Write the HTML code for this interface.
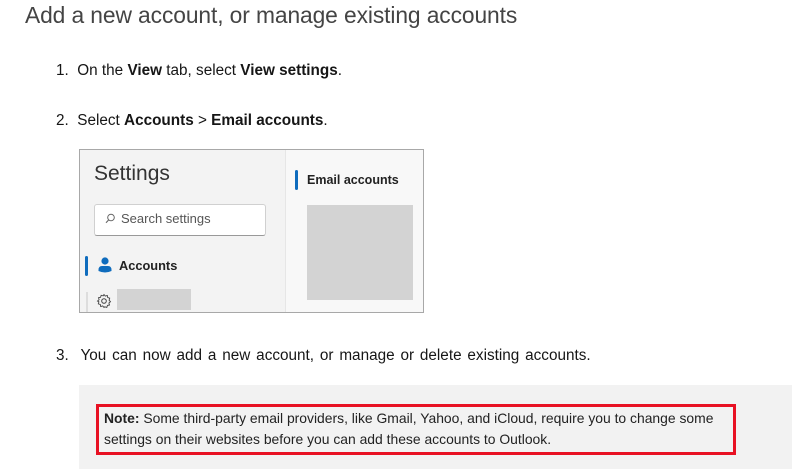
<!DOCTYPE html>
<html><head><style>
body{margin:0;width:801px;height:469px;background:#fff;position:relative;overflow:hidden;font-family:"Liberation Sans",sans-serif;color:#161616}
.a{position:absolute;white-space:nowrap}
b{font-weight:bold}
</style></head><body>
<div class="a" style="left:25px;top:2px;font-size:22.8px;color:#444;font-weight:300;letter-spacing:-0.1px">Add a new account, or manage existing accounts</div>
<div class="a" style="left:56px;top:62px;font-size:15.3px">1.&nbsp;&nbsp;On the <b>View</b> tab, select <b>View settings</b>.</div>
<div class="a" style="left:56px;top:112px;font-size:15.3px">2.&nbsp;&nbsp;Select <b>Accounts</b> &gt; <b>Email accounts</b>.</div>
<div class="a" style="left:79px;top:149px;width:343px;height:162px;border:1px solid #a8a8a8;background:#f3f3f3;overflow:hidden">
  <div class="a" style="left:205px;top:0;width:138px;height:162px;background:#f8f8f8;border-left:1px solid #e6e6e6"></div>
  <div class="a" style="left:14px;top:12px;font-size:21px;color:#333">Settings</div>
  <div class="a" style="left:14px;top:54px;width:170px;height:30px;background:#fff;border:1px solid #d0d0d0;border-bottom-color:#999;border-radius:3px"></div>
  <svg class="a" style="left:25px;top:63px" width="11" height="11" viewBox="0 0 11 11"><circle cx="6" cy="4.5" r="3.3" fill="none" stroke="#666" stroke-width="1"/><line x1="3.6" y1="7" x2="1" y2="9.8" stroke="#666" stroke-width="1.1"/></svg>
  <div class="a" style="left:41px;top:61px;font-size:13px;color:#555">Search settings</div>
  <div class="a" style="left:5px;top:106px;width:3px;height:20px;background:#0f6cbd;border-radius:2px"></div>
  <svg class="a" style="left:18px;top:107px" width="14" height="16" viewBox="0 0 14 16"><circle cx="7" cy="4" r="3.6" fill="#0f6cbd"/><path d="M0.5 13 Q0.5 9 4 9 H10 Q13.5 9 13.5 13 V14 Q7 17 0.5 14Z" fill="#0f6cbd"/></svg>
  <div class="a" style="left:39px;top:108px;font-size:12.8px;font-weight:bold;color:#222">Accounts</div>
  <div class="a" style="left:6px;top:142px;width:2px;height:20px;background:#ddd"></div>
  <svg class="a" style="left:16px;top:143px" width="16" height="16" viewBox="0 0 16 16"><circle cx="8" cy="8" r="2.3" fill="none" stroke="#444"/><path d="M8 1.5l1.3 1.6 2-.6.4 2 2 .7-.6 2 1.4 1.5-1.6 1.3.6 2-2 .4-.7 2-2-.6L8 14.5 6.7 12.9l-2 .6-.4-2-2-.7.6-2L1.5 8l1.6-1.3-.6-2 2-.4.7-2 2 .6z" fill="none" stroke="#444" stroke-width="0.9"/></svg>
  <div class="a" style="left:37px;top:139px;width:74px;height:21px;background:#d3d3d3"></div>
  <div class="a" style="left:215px;top:20px;width:3px;height:20px;background:#0f6cbd;border-radius:2px"></div>
  <div class="a" style="left:227px;top:23px;font-size:12.5px;font-weight:bold;color:#222">Email accounts</div>
  <div class="a" style="left:227px;top:55px;width:106px;height:95px;background:#d3d3d3"></div>
</div>
<div class="a" style="left:56px;top:347px;font-size:15.3px;word-spacing:1.6px">3.&nbsp;&nbsp;You can now add a new account, or manage or delete existing accounts.</div>
<div class="a" style="left:79px;top:385px;width:713px;height:84px;background:#f2f2f2"></div>
<div class="a" style="left:96px;top:404px;width:629px;height:44px;border:3px solid #e81123;font-size:13.9px;line-height:21px;padding:1px 0 0 5px;box-sizing:content-box;color:#222"><b>Note:</b> Some third-party email providers, like Gmail, Yahoo, and iCloud, require you to change some<br>settings on their websites before you can add these accounts to Outlook.</div>
</body></html>
